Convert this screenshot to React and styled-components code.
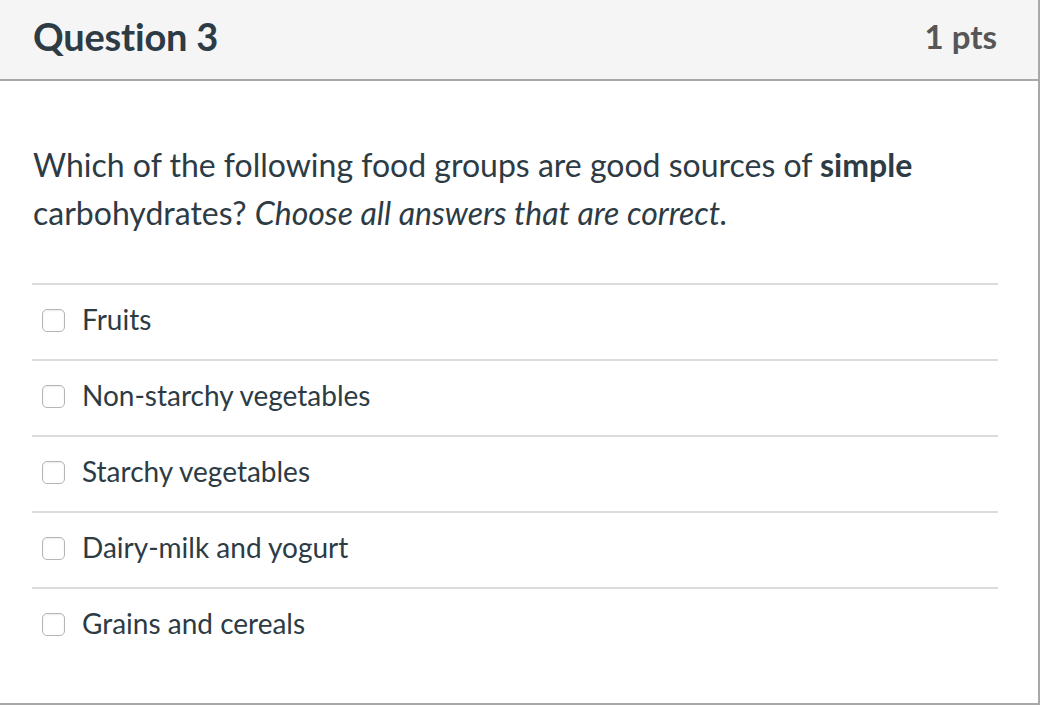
import React from "react";
import styled, { createGlobalStyle } from "styled-components";

const Global = createGlobalStyle`
  html, body { margin: 0; padding: 0; background: #fff; }
  body { font-family: Lato, "Noto Sans", sans-serif; color: #2d3b45; }
`;

const Card = styled.div`
  width: 1038px;
  height: 703px;
  box-sizing: content-box;
  border-right: 2px solid #a8a8a8;
  border-bottom: 2px solid #a8a8a8;
  background: #fff;
  display: flex;
  flex-direction: column;
`;

const Header = styled.header`
  height: 81px;
  box-sizing: border-box;
  background: #f5f5f5;
  border-bottom: 2px solid #a8a8a8;
  display: flex;
  align-items: center;
  justify-content: space-between;
  padding: 0 41px 7px 33px;
`;

const Title = styled.h2`
  margin: 0;
  font-size: 38px;
  font-weight: 700;
  letter-spacing: -0.2px;
  color: #2d3b45;
`;

const Points = styled.span`
  font-size: 33px;
  font-weight: 700;
  color: #565656;
`;

const Body = styled.div`
  padding: 60px 40px 0 32px;
`;

const Prompt = styled.p`
  margin: 0 0 46px 1px;
  font-size: 32px;
  line-height: 48px;
  color: #2d3b45;
  strong { font-weight: 700; }
  em { font-style: italic; }
`;

const Answers = styled.ul`
  list-style: none;
  margin: 0;
  padding: 0;
`;

const Answer = styled.li`
  height: 76px;
  box-sizing: border-box;
  border-top: 2px solid #dcdcdc;
  display: flex;
  align-items: center;
  padding: 0 0 6px 10px;
  gap: 17px;
`;

const Box = styled.span`
  width: 23px;
  height: 23px;
  box-sizing: border-box;
  border: 1.5px solid #b5b5b5;
  border-radius: 5px;
  background: #fff;
  box-shadow: inset 0 1px 2px rgba(0,0,0,0.08);
  flex: none;
  margin-top: 2px;
`;

const Label = styled.span`
  font-size: 28px;
  color: #2d3b45;
`;

const answers = [
  "Fruits",
  "Non-starchy vegetables",
  "Starchy vegetables",
  "Dairy-milk and yogurt",
  "Grains and cereals",
];

export default function App() {
  return (
    <>
      <Global />
      <Card>
        <Header>
          <Title>Question 3</Title>
          <Points>1 pts</Points>
        </Header>
        <Body>
          <Prompt>
            Which of the following food groups are good sources of <strong>simple</strong> carbohydrates? <em>Choose all answers that are correct.</em>
          </Prompt>
          <Answers>
            {answers.map((a) => (
              <Answer key={a}>
                <Box />
                <Label>{a}</Label>
              </Answer>
            ))}
          </Answers>
        </Body>
      </Card>
    </>
  );
}
